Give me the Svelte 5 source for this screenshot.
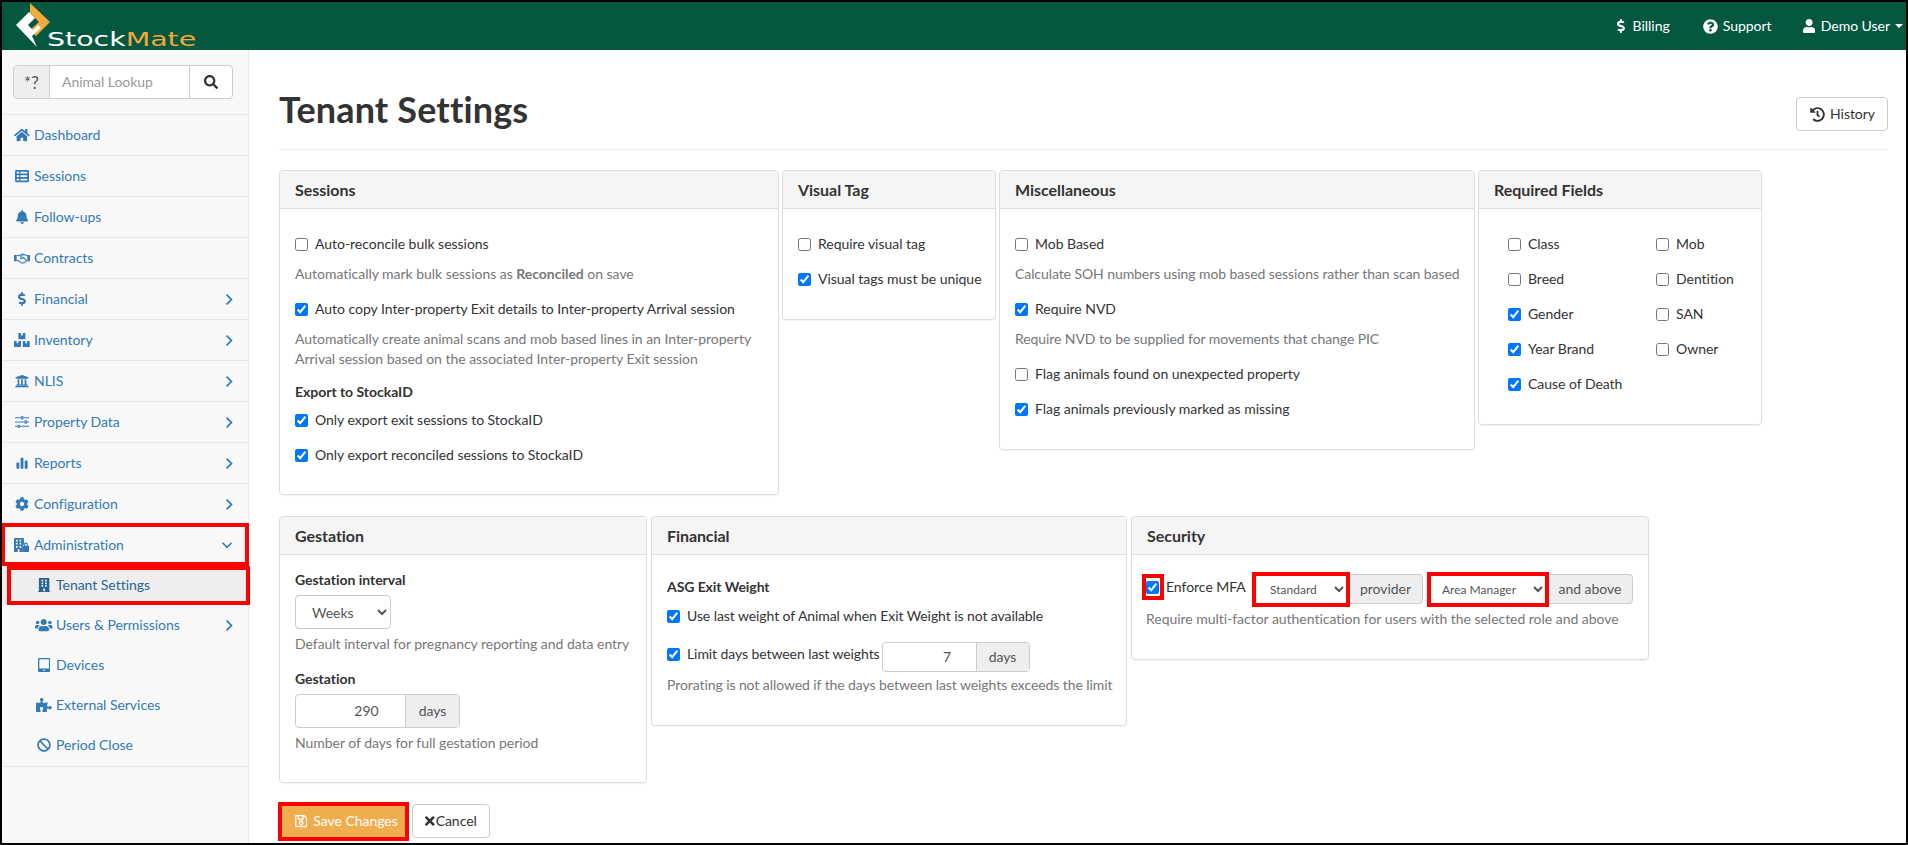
<script>
  const I = {
    home: ['0 0 576 512', 'M280.37 148.26L96 300.11V464a16 16 0 0 0 16 16l112.06-.29a16 16 0 0 0 15.92-16V368a16 16 0 0 1 16-16h64a16 16 0 0 1 16 16v95.64a16 16 0 0 0 16 16.05L464 480a16 16 0 0 0 16-16V300L295.67 148.26a12.19 12.19 0 0 0-15.3 0zM571.6 251.47L488 182.56V44.05a12 12 0 0 0-12-12h-56a12 12 0 0 0-12 12v72.61L318.47 43a48 48 0 0 0-61 0L4.34 251.47a12 12 0 0 0-1.6 16.9l25.5 31A12 12 0 0 0 45.15 301l235.22-193.74a12.19 12.19 0 0 1 15.3 0L530.9 301a12 12 0 0 0 16.9-1.6l25.5-31a12 12 0 0 0-1.7-16.93z'],
    table: ['0 0 512 512', 'M464 32H48C21.49 32 0 53.49 0 80v352c0 26.51 21.49 48 48 48h416c26.51 0 48-21.49 48-48V80c0-26.51-21.49-48-48-48zM152 416H64V352h88zm0-128H64V224h88zm0-128H64V96h88zm296 256H200V352h248zm0-128H200V224h248zm0-128H200V96h248z'],
    bell: ['0 0 448 512', 'M224 512c35.32 0 63.97-28.65 63.97-64H160.03c0 35.35 28.65 64 63.97 64zm215.39-149.71c-19.32-20.76-55.47-51.99-55.47-154.29 0-77.7-54.48-139.9-127.94-155.16V32c0-17.67-14.32-32-31.98-32s-31.98 14.33-31.98 32v20.84C118.56 68.1 64.08 130.3 64.08 208c0 102.3-36.15 133.53-55.47 154.29-6 6.45-8.66 14.16-8.61 21.71.11 16.4 12.98 32 32.1 32h383.8c19.12 0 32-15.6 32.1-32 .05-7.55-2.61-15.27-8.61-21.71z'],
    dollar: ['0 0 288 512', 'M209.2 233.4l-108-31.6C88.7 198.2 80 186.5 80 173.5c0-16.3 13.2-29.5 29.5-29.5h66.3c12.2 0 24.2 3.7 34.2 10.5 6.1 4.1 14.3 3.1 19.5-2l34.8-34c7.1-6.9 6.1-18.4-1.8-24.5C238 74.8 207.4 64.1 176 64V16c0-8.8-7.2-16-16-16h-32c-8.8 0-16 7.2-16 16v48h-2.5C45.8 64-5.4 118.7.5 183.6c4.2 46.1 39.4 83.6 83.8 96.6l102.5 30c12.5 3.7 21.2 15.3 21.2 28.3 0 16.3-13.2 29.5-29.5 29.5h-66.3C100 368 88 364.3 78 357.5c-6.1-4.1-14.3-3.1-19.5 2l-34.8 34c-7.1 6.9-6.1 18.4 1.8 24.5 24.5 19.2 55.1 29.9 86.5 30v48c0 8.8 7.2 16 16 16h32c8.8 0 16-7.2 16-16v-48.2c46.6-.9 90.3-28.6 105.7-72.7 21.5-61.6-14.6-124.8-72.5-141.7z'],
    boxes: ['0 0 576 512', 'M560 288h-80v96l-32-21.3-32 21.3v-96h-80c-8.8 0-16 7.2-16 16v192c0 8.8 7.2 16 16 16h224c8.8 0 16-7.2 16-16V304c0-8.8-7.2-16-16-16zm-384-64h224c8.8 0 16-7.2 16-16V16c0-8.8-7.2-16-16-16h-80v96l-32-21.3L256 96V0h-80c-8.8 0-16 7.2-16 16v192c0 8.8 7.2 16 16 16zm64 64h-80v96l-32-21.3L96 384v-96H16c-8.8 0-16 7.2-16 16v192c0 8.8 7.2 16 16 16h224c8.8 0 16-7.2 16-16V304c0-8.8-7.2-16-16-16z'],
    bank: ['0 0 512 512', 'M496 128v16a8 8 0 0 1-8 8h-24v12c0 6.627-5.373 12-12 12H60c-6.627 0-12-5.373-12-12v-12H24a8 8 0 0 1-8-8v-16a8 8 0 0 1 4.941-7.392l232-88a7.996 7.996 0 0 1 6.118 0l232 88A8 8 0 0 1 496 128zm-24 304H40c-13.255 0-24 10.745-24 24v16a8 8 0 0 0 8 8h464a8 8 0 0 0 8-8v-16c0-13.255-10.745-24-24-24zM96 192v192H60c-6.627 0-12 5.373-12 12v20h416v-20c0-6.627-5.373-12-12-12h-36V192h-64v192h-64V192h-64v192h-64V192H96z'],
    sliders: ['0 0 512 512', 'M0 84h224V56a16 16 0 0 1 16-16h48a16 16 0 0 1 16 16v28h208v32H304v28a16 16 0 0 1-16 16h-48a16 16 0 0 1-16-16v-28H0zm256-12v56h16V72zM0 240h352v-28a16 16 0 0 1 16-16h48a16 16 0 0 1 16 16v28h80v32h-80v28a16 16 0 0 1-16 16h-48a16 16 0 0 1-16-16v-28H0zm384-12v56h16v-56zM0 396h96v-28a16 16 0 0 1 16-16h48a16 16 0 0 1 16 16v28h336v32H176v28a16 16 0 0 1-16 16h-48a16 16 0 0 1-16-16v-28H0zm128-12v56h16v-56z'],
    bars: ['0 0 448 512', 'M32 240h72a16 16 0 0 1 16 16v192a16 16 0 0 1-16 16H32a16 16 0 0 1-16-16V256a16 16 0 0 1 16-16zM184 64h72a16 16 0 0 1 16 16v368a16 16 0 0 1-16 16h-72a16 16 0 0 1-16-16V80a16 16 0 0 1 16-16zM336 160h72a16 16 0 0 1 16 16v272a16 16 0 0 1-16 16h-72a16 16 0 0 1-16-16V176a16 16 0 0 1 16-16z'],
    cog: ['0 0 512 512', 'M487.4 315.7l-42.6-24.6c4.3-23.2 4.3-47 0-70.2l42.6-24.6c4.9-2.8 7.1-8.6 5.5-14-11.1-35.6-30-67.8-54.7-94.6-3.8-4.1-10-5.1-14.8-2.3L380.8 110c-17.9-15.4-38.5-27.3-60.8-35.1V25.8c0-5.6-3.9-10.5-9.4-11.7-36.7-8.2-74.3-7.8-109.2 0-5.5 1.2-9.4 6.1-9.4 11.7V75c-22.2 7.9-42.8 19.8-60.8 35.1L88.7 85.5c-4.9-2.8-11-1.9-14.8 2.3-24.7 26.7-43.6 58.9-54.7 94.6-1.7 5.4.6 11.2 5.5 14L67.3 221c-4.3 23.2-4.3 47 0 70.2l-42.6 24.6c-4.9 2.8-7.1 8.6-5.5 14 11.1 35.6 30 67.8 54.7 94.6 3.8 4.1 10 5.1 14.8 2.3l42.6-24.6c17.9 15.4 38.5 27.3 60.8 35.1v49.2c0 5.6 3.9 10.5 9.4 11.7 36.7 8.2 74.3 7.8 109.2 0 5.5-1.2 9.4-6.1 9.4-11.7v-49.2c22.2-7.9 42.8-19.8 60.8-35.1l42.6 24.6c4.9 2.8 11 1.9 14.8-2.3 24.7-26.7 43.6-58.9 54.7-94.6 1.5-5.5-.7-11.3-5.6-14.1zM256 336c-44.1 0-80-35.9-80-80s35.9-80 80-80 80 35.9 80 80-35.9 80-80 80z'],
    building: ['0 0 448 512', 'M436 480h-20V24c0-13.255-10.745-24-24-24H56C42.745 0 32 10.745 32 24v456H12c-6.627 0-12 5.373-12 12v20h448v-20c0-6.627-5.373-12-12-12zM128 76c0-6.627 5.373-12 12-12h40c6.627 0 12 5.373 12 12v40c0 6.627-5.373 12-12 12h-40c-6.627 0-12-5.373-12-12V76zm0 96c0-6.627 5.373-12 12-12h40c6.627 0 12 5.373 12 12v40c0 6.627-5.373 12-12 12h-40c-6.627 0-12-5.373-12-12v-40zm52 148h-40c-6.627 0-12-5.373-12-12v-40c0-6.627 5.373-12 12-12h40c6.627 0 12 5.373 12 12v40c0 6.627-5.373 12-12 12zm76 160h-64v-84c0-6.627 5.373-12 12-12h40c6.627 0 12 5.373 12 12v84zm64-172c0 6.627-5.373 12-12 12h-40c-6.627 0-12-5.373-12-12v-40c0-6.627 5.373-12 12-12h40c6.627 0 12 5.373 12 12v40zm0-96c0 6.627-5.373 12-12 12h-40c-6.627 0-12-5.373-12-12v-40c0-6.627 5.373-12 12-12h40c6.627 0 12 5.373 12 12v40zm0-96c0 6.627-5.373 12-12 12h-40c-6.627 0-12-5.373-12-12V76c0-6.627 5.373-12 12-12h40c6.627 0 12 5.373 12 12v40z'],
    lockbuilding: ['0 0 552 512', 'M24 0H340a24 24 0 0 1 24 24V232c-30 10-44 40-44 72v208H200V412h-64v100H0V24A24 24 0 0 1 24 0zM72 64v64h64V64zM200 64v64h64V64zM72 176v64h64V176zM200 176v64h64V176zM72 288v64h64V288zM200 288v64h64V288zM360 280v-40a72 72 0 0 1 144 0v40h16a32 32 0 0 1 32 32v168a32 32 0 0 1-32 32H344a32 32 0 0 1-32-32V312a32 32 0 0 1 32-32zM400 280h64v-40a32 32 0 0 0-64 0z'],
    users: ['0 0 640 512', 'M96 224c35.3 0 64-28.7 64-64s-28.7-64-64-64-64 28.7-64 64 28.7 64 64 64zm448 0c35.3 0 64-28.7 64-64s-28.7-64-64-64-64 28.7-64 64 28.7 64 64 64zm32 32h-64c-17.6 0-33.5 7.1-45.1 18.6 40.3 22.1 68.9 62 75.1 109.4h66c17.7 0 32-14.3 32-32v-32c0-35.3-28.7-64-64-64zm-256 0c61.9 0 112-50.1 112-112S381.9 32 320 32 208 82.1 208 144s50.1 112 112 112zm76.8 32h-8.3c-20.8 10-43.9 16-68.5 16s-47.6-6-68.5-16h-8.3C179.6 288 128 339.6 128 403.2V432c0 26.5 21.5 48 48 48h288c26.5 0 48-21.5 48-48v-28.8c0-63.6-51.6-115.2-115.2-115.2zm-223.7-13.4C161.5 263.1 145.6 256 128 256H64c-35.3 0-64 28.7-64 64v32c0 17.7 14.3 32 32 32h65.9c6.3-47.4 34.9-87.3 75.2-109.4z'],
    tablet: ['0 0 448 512', 'M400 0H48C21.5 0 0 21.5 0 48v416c0 26.5 21.5 48 48 48h352c26.5 0 48-21.5 48-48V48c0-26.5-21.5-48-48-48zM224 480c-17.7 0-32-14.3-32-32s14.3-32 32-32 32 14.3 32 32-14.3 32-32 32zm176-108c0 6.6-5.4 12-12 12H60c-6.6 0-12-5.4-12-12V60c0-6.6 5.4-12 12-12h328c6.6 0 12 5.4 12 12v312z'],
    puzzle: ['0 0 576 512', 'M519.442 288.651c-41.519 0-59.5 31.593-82.058 31.593C377.409 320.244 432 144 432 144s-196.288 80-196.288-3.297c0-35.827 36.288-46.25 36.288-85.985C272 19.216 243.885 0 210.539 0c-34.654 0-66.366 18.891-66.366 56.346 0 41.364 31.711 59.277 31.711 81.75C175.885 207.719 0 166.758 0 166.758v333.237s178.635 41.047 178.635-28.662c0-22.473-40-40.107-40-81.471 0-37.456 29.25-56.346 63.577-56.346 33.673 0 61.788 19.216 61.788 54.717 0 39.735-36.288 50.158-36.288 85.985 0 60.803 129.675 25.73 181.23 25.73 0 0-34.725-120.101 25.827-120.101 35.962 0 46.423 36.152 86.308 36.152C556.712 416 576 387.99 576 354.443c0-34.199-18.962-65.792-56.558-65.792z'],
    ban: ['0 0 512 512', 'M256 8C119.034 8 8 119.033 8 256s111.034 248 248 248 248-111.034 248-248S392.967 8 256 8zm130.108 117.892c65.448 65.448 70 165.481 20.677 235.637L150.47 105.216c70.204-49.356 170.226-44.735 235.638 20.676zM125.892 386.108c-65.448-65.448-70-165.481-20.677-235.637L361.53 406.784c-70.203 49.356-170.226 44.736-235.638-20.676z'],
    search: ['0 0 512 512', 'M505 442.7L405.3 343c-4.5-4.5-10.6-7-17-7H372c27.6-35.3 44-79.7 44-128C416 93.1 322.9 0 208 0S0 93.1 0 208s93.1 208 208 208c48.3 0 92.7-16.4 128-44v16.3c0 6.4 2.5 12.5 7 17l99.7 99.7c9.4 9.4 24.6 9.4 33.9 0l28.3-28.3c9.4-9.4 9.4-24.6.1-34zM208 336c-70.7 0-128-57.2-128-128 0-70.7 57.2-128 128-128 70.7 0 128 57.2 128 128 0 70.7-57.2 128-128 128z'],
    user: ['0 0 448 512', 'M224 256c70.7 0 128-57.3 128-128S294.7 0 224 0 96 57.3 96 128s57.3 128 128 128zm89.6 32h-16.7c-22.2 10.2-46.9 16-72.9 16s-50.6-5.8-72.9-16h-16.7C60.2 288 0 348.2 0 422.4V464c0 26.5 21.5 48 48 48h352c26.5 0 48-21.5 48-48v-41.6c0-74.2-60.2-134.4-134.4-134.4z'],
    question: ['0 0 512 512', 'M504 256c0 136.997-111.043 248-248 248S8 392.997 8 256C8 119.083 119.043 8 256 8s248 111.083 248 248zM262.655 90c-54.497 0-89.255 22.957-116.549 63.758-3.536 5.286-2.353 12.415 2.715 16.258l34.699 26.31c5.205 3.947 12.621 3.008 16.665-2.122 17.864-22.658 30.113-35.797 57.303-35.797 20.429 0 45.698 13.148 45.698 32.958 0 14.976-12.363 22.667-32.534 33.976C247.128 238.528 216 254.941 216 296v4c0 6.627 5.373 12 12 12h56c6.627 0 12-5.373 12-12v-1.333c0-28.462 83.186-29.647 83.186-106.667 0-58.002-60.165-102-116.531-102zM256 338c-25.365 0-46 20.635-46 46 0 25.364 20.635 46 46 46s46-20.636 46-46c0-25.365-20.635-46-46-46z'],
    save: ['0 0 448 512', 'M433.941 129.941l-83.882-83.882A48 48 0 0 0 316.118 32H48C21.49 32 0 53.49 0 80v352c0 26.51 21.49 48 48 48h352c26.51 0 48-21.49 48-48V163.882a48 48 0 0 0-14.059-33.941zM272 80v80H144V80h128zm122 352H54a6 6 0 0 1-6-6V86a6 6 0 0 1 6-6h42v104c0 13.255 10.745 24 24 24h176c13.255 0 24-10.745 24-24V83.882l78.243 78.243a6 6 0 0 1 1.757 4.243V426a6 6 0 0 1-6 6zM224 232c-48.523 0-88 39.477-88 88s39.477 88 88 88 88-39.477 88-88-39.477-88-88-88zm0 128c-22.056 0-40-17.944-40-40s17.944-40 40-40 40 17.944 40 40-17.944 40-40 40z'],
    times: ['0 0 352 512', 'M242.72 256l100.07-100.07c12.28-12.28 12.28-32.19 0-44.48l-22.24-22.24c-12.28-12.28-32.19-12.28-44.48 0L176 189.28 75.93 89.21c-12.28-12.28-32.19-12.28-44.48 0L9.21 111.45c-12.28 12.28-12.28 32.19 0 44.48L109.28 256 9.21 356.07c-12.28 12.28-12.28 32.19 0 44.48l22.24 22.24c12.28 12.28 32.2 12.28 44.48 0L176 322.72l100.07 100.07c12.28 12.28 32.2 12.28 44.48 0l22.24-22.24c12.28-12.28 12.28-32.19 0-44.48L242.72 256z'],
    history: ['0 0 512 512', 'M504 255.531c.253 136.64-111.18 248.372-247.82 248.468-59.015.042-113.223-20.53-155.822-54.911-11.077-8.94-11.905-25.541-1.839-35.607l11.267-11.267c8.609-8.609 22.353-9.551 31.891-1.984C173.062 425.135 212.781 440 256 440c101.705 0 184-82.311 184-184 0-101.705-82.311-184-184-184-48.814 0-93.149 18.969-126.068 49.932l50.754 50.754c10.08 10.08 2.941 27.314-11.313 27.314H24c-8.837 0-16-7.163-16-16V38.627c0-14.254 17.234-21.393 27.314-11.314l49.372 49.372C129.209 34.136 189.552 8 256 8c136.81 0 247.747 110.78 248 247.531zm-180.912 78.784l9.823-12.63c8.138-10.463 6.253-25.542-4.21-33.679L288 256.349V152c0-13.255-10.745-24-24-24h-16c-13.255 0-24 10.745-24 24v135.651l65.409 50.874c10.463 8.137 25.541 6.253 33.679-4.21z']
  };

  const topNav = [
    { icon: 'home', label: 'Dashboard' }, { icon: 'table', label: 'Sessions' },
    { icon: 'bell', label: 'Follow-ups' }, { icon: 'handshake', label: 'Contracts' },
    { icon: 'dollar', label: 'Financial', more: true }, { icon: 'boxes', label: 'Inventory', more: true },
    { icon: 'bank', label: 'NLIS', more: true }, { icon: 'sliders', label: 'Property Data', more: true },
    { icon: 'bars', label: 'Reports', more: true }, { icon: 'cog', label: 'Configuration', more: true }
  ];
  const subNav = [
    { icon: 'users', label: 'Users & Permissions', more: true }, { icon: 'tablet', label: 'Devices' },
    { icon: 'puzzle', label: 'External Services' }, { icon: 'ban', label: 'Period Close' }
  ];
  const req1 = [['Class', false], ['Breed', false], ['Gender', true], ['Year Brand', true], ['Cause of Death', true]];
  const req2 = [['Mob', false], ['Dentition', false], ['SAN', false], ['Owner', false]];
</script>

{#snippet icon(name, cls = '')}
  {#if name === 'handshake'}
    <svg class="shake" viewBox="0 0 18 13" aria-hidden="true">
      <path class="solid" d="M0 2.5h3v7H0zM15 2.5h3v7h-3z" />
      <path class="line" d="M3 3.5l3.5-.5 2-1.2h2L15 3.5M3 8.5l1.5.2 4 3 1 .2 1-.8 1 .2 1-1 .8-.2.7-1.3 1-.4M10.2 2.5L7.5 5c-.7 1 .6 1.8 1.6 1.2l1.6-1 3 3.4" />
    </svg>
  {:else}
    <svg class="ic {cls}" viewBox={I[name][0]} aria-hidden="true"><path d={I[name][1]} /></svg>
  {/if}
{/snippet}

{#snippet chev()}
  <svg class="chev" viewBox="0 0 10 16" aria-hidden="true"><path d="M2 2l6 6-6 6" /></svg>
{/snippet}

{#snippet check(label, on)}
  <label class="check"><input type="checkbox" checked={on} /><span>{label}</span></label>
{/snippet}

<div class="frame">
  <header class="top">
    <div class="brand">
      <svg class="mark" viewBox="0 0 40 46" aria-hidden="true">
        <polygon fill="#f3a93b" points="15,0 35,19 21,33 15,27 24,19 15,10" />
        <polygon fill="#fff" points="1,22 14,9 20,15 13,22 18,27 23,22 26,25 17,33 22,44 22,44 1,22" />
      </svg>
      <span class="word"><span>Stock</span><span class="mate">Mate</span></span>
    </div>
    <nav class="topnav">
      <span class="tn">{@render icon('dollar', 'w-d')}Billing</span>
      <span class="tn">{@render icon('question', 'w-q')}Support</span>
      <span class="tn">{@render icon('user', 'w-u')}Demo User<i class="caret"></i></span>
    </nav>
  </header>

  <div class="body">
    <aside class="side">
      <div class="search">
        <div class="lookup">
          <span class="star">*?</span>
          <span class="ph">Animal Lookup</span>
          <span class="go">{@render icon('search')}</span>
        </div>
      </div>
      {#each topNav as n}
        <div class="item"><span class="slot">{@render icon(n.icon)}</span><span class="lbl">{n.label}</span>{#if n.more}{@render chev()}{/if}</div>
      {/each}
      <div class="item admin">
        <span class="slot">{@render icon('lockbuilding')}</span><span class="lbl">Administration</span>
        <svg class="chev down" viewBox="0 0 16 10" aria-hidden="true"><path d="M2 2l6 6 6-6" /></svg>
        <i class="hl hl-admin"></i>
      </div>
      <div class="sub active">
        <span class="slot">{@render icon('building')}</span><span class="lbl">Tenant Settings</span>
        <i class="hl hl-tenant"></i>
      </div>
      {#each subNav as n}
        <div class="sub"><span class="slot">{@render icon(n.icon)}</span><span class="lbl">{n.label}</span>{#if n.more}{@render chev()}{/if}</div>
      {/each}
      <div class="endline"></div>
    </aside>

    <main class="main">
      <div class="title">
        <h1>Tenant Settings</h1>
        <button class="btn hist">{@render icon('history')}History</button>
      </div>

      <div class="row first">
        <section class="card c-sessions">
          <h2>Sessions</h2>
          <div class="cb">
            {@render check('Auto-reconcile bulk sessions', false)}
            <p class="help">Automatically mark bulk sessions as <b>Reconciled</b> on save</p>
            {@render check('Auto copy Inter-property Exit details to Inter-property Arrival session', true)}
            <p class="help">Automatically create animal scans and mob based lines in an Inter-property<br />Arrival session based on the associated Inter-property Exit session</p>
            <h3 class="export">Export to StockaID</h3>
            {@render check('Only export exit sessions to StockaID', true)}
            {@render check('Only export reconciled sessions to StockaID', true)}
          </div>
        </section>
        <section class="card c-visual">
          <h2>Visual Tag</h2>
          <div class="cb">
            {@render check('Require visual tag', false)}
            {@render check('Visual tags must be unique', true)}
          </div>
        </section>
        <section class="card c-misc">
          <h2>Miscellaneous</h2>
          <div class="cb">
            {@render check('Mob Based', false)}
            <p class="help">Calculate SOH numbers using mob based sessions rather than scan based</p>
            {@render check('Require NVD', true)}
            <p class="help">Require NVD to be supplied for movements that change PIC</p>
            {@render check('Flag animals found on unexpected property', false)}
            {@render check('Flag animals previously marked as missing', true)}
          </div>
        </section>
        <section class="card c-req">
          <h2>Required Fields</h2>
          <div class="cb req">
            <div class="col col-a">{#each req1 as r}{@render check(r[0], r[1])}{/each}</div>
            <div class="col">{#each req2 as r}{@render check(r[0], r[1])}{/each}</div>
          </div>
        </section>
      </div>

      <div class="row second">
        <section class="card c-gest">
          <h2>Gestation</h2>
          <div class="cb tight">
            <h3>Gestation interval</h3>
            <select class="sel weeks"><option>Weeks</option></select>
            <p class="help h5">Default interval for pregnancy reporting and data entry</p>
            <h3>Gestation</h3>
            <div class="ig big"><span class="val v-gest">290</span><span class="addon">days</span></div>
            <p class="help h5">Number of days for full gestation period</p>
          </div>
        </section>
        <section class="card c-fin">
          <h2>Financial</h2>
          <div class="cb">
            <h3 class="asg">ASG Exit Weight</h3>
            {@render check('Use last weight of Animal when Exit Weight is not available', true)}
            <div class="limit">
              {@render check('Limit days between last weights', true)}
              <div class="ig small"><span class="val v-lim">7</span><span class="addon">days</span></div>
            </div>
            <p class="help lim-help">Prorating is not allowed if the days between last weights exceeds the limit</p>
          </div>
        </section>
        <section class="card c-sec">
          <h2>Security</h2>
          <div class="cb tight sec">
            <div class="mfa">
              <label class="enforce">
                <span class="boxwrap"><input type="checkbox" checked /><i class="hl hl-check"></i></span>
                <span>Enforce MFA</span>
              </label>
              <span class="selwrap s-std"><select class="mini"><option>Standard</option></select><i class="hl hl-sel"></i></span>
              <span class="addon small-add a-prov">provider</span>
              <span class="selwrap s-area"><select class="mini"><option>Area Manager</option></select><i class="hl hl-sel"></i></span>
              <span class="addon small-add a-above">and above</span>
            </div>
            <p class="help h5">Require multi-factor authentication for users with the selected role and above</p>
          </div>
        </section>
      </div>

      <div class="actions">
        <button class="btn save">{@render icon('save')}Save Changes<i class="hl hl-save"></i></button>
        <button class="btn cancel">{@render icon('times')}Cancel</button>
      </div>
    </main>
  </div>
</div>

<style>
  :global(body) { margin: 0; background: #fff; }
  .frame {
    box-sizing: border-box; width: 1908px; height: 845px; border: 2px solid #000; overflow: hidden;
    display: flex; flex-direction: column;
    font-family: Lato, "Liberation Sans", sans-serif; font-size: 14px; line-height: 20px; color: #333; letter-spacing: -0.03px;
  }
  .ic { display: block; flex: none; height: 14px; width: auto; fill: currentColor; fill-rule: evenodd; }
  .shake { display: block; width: 18px; height: 13px; }
  .shake .solid { fill: currentColor; }
  .shake .line { fill: none; stroke: currentColor; stroke-width: 1.2; }

  .top { height: 48px; flex: none; background: #04583f; display: flex; align-items: center; justify-content: space-between; color: #fff; }
  .brand { position: relative; display: flex; height: 48px; width: 220px; }
  .mark { width: 40px; height: 46px; margin: 1px 0 0 13px; flex: none; }
  .word {
    font-family: "DejaVu Sans", sans-serif; font-size: 19px; line-height: 20px; white-space: nowrap;
    transform: scaleX(1.5); transform-origin: left; margin: 27px 0 0 -8px; height: 20px; color: #fff;
  }
  .mate { color: #f3a93b; }
  .topnav { display: flex; align-items: center; margin-right: 3px; }
  .tn { display: flex; align-items: center; margin-left: 31px; }
  .tn:nth-child(2) { margin-left: 33px; }
  .tn .w-d { height: 14px; margin-right: 8px; }
  .tn .w-q { height: 15px; margin-right: 5px; }
  .tn .w-u { height: 14px; margin-right: 6px; }
  .caret { width: 0; height: 0; margin-left: 5px; border: 4px solid transparent; border-top-color: #fff; border-bottom: 0; }

  .body { flex: 1; display: flex; min-height: 0; }
  .side { width: 247px; flex: none; box-sizing: border-box; background: #f8f8f8; border-right: 1px solid #e7e7e7; }
  .search { padding: 15px 14px 15px 11px; border-bottom: 1px solid #e7e7e7; }
  .lookup { display: flex; height: 34px; box-sizing: border-box; width: 220px; border: 1px solid #ccc; border-radius: 4px; background: #fff; align-items: stretch; }
  .star { width: 36px; flex: none; border-right: 1px solid #ccc; background: #eee; color: #555; display: flex; align-items: center; justify-content: center; border-radius: 3px 0 0 3px; font-size: 17px; padding-top: 2px; box-sizing: border-box; }
  .ph { flex: 1; color: #999; display: flex; align-items: center; padding-left: 12px; }
  .go { width: 42px; flex: none; border-left: 1px solid #ccc; display: flex; align-items: center; justify-content: center; color: #333; }
  .item, .sub { position: relative; display: flex; align-items: center; color: #337ab7; box-sizing: border-box; }
  .item { height: 41px; border-bottom: 1px solid #e7e7e7; padding-left: 12px; }
  .slot { width: 16px; height: 16px; margin-right: 4px; display: flex; align-items: center; justify-content: center; flex: none; }
  .lbl { flex: 1; }
  .chev { width: 8px; height: 13px; margin-right: 15px; fill: none; stroke: #337ab7; stroke-width: 2.2; }
  .item .down { width: 12px; height: 8px; margin-right: 15px; }
  .sub { height: 40px; padding-left: 33px; }
  .sub .slot { margin-right: 3px; width: 18px; }
  .sub.active { background: #eee; color: #2a6496; }
  .endline { border-bottom: 1px solid #e7e7e7; margin-top: 1px; }
  .item.admin { height: 40px; border-bottom: 0; }

  .hl { position: absolute; border: 4px solid #f00; box-sizing: border-box; pointer-events: none; z-index: 2; }
  .hl-admin { left: -1px; right: -1px; top: -2px; bottom: -1px; }
  .hl-tenant { left: 5px; right: -2px; top: 1px; bottom: 0; }
  .hl-check { left: -4px; right: 2px; top: -7px; bottom: -6px; }
  .hl-sel { left: -2px; right: -2px; top: -2px; bottom: -3px; }
  .hl-save { left: -2px; right: -2px; top: -3px; bottom: -4px; }

  .main { flex: 1; min-width: 0; padding: 0 18px 0 30px; box-sizing: border-box; }
  .title { display: flex; justify-content: space-between; align-items: flex-start; height: 99px; border-bottom: 1px solid #eee; margin-bottom: 20px; }
  h1 { margin: 37px 0 0; font-size: 36px; line-height: 44px; font-weight: 700; color: #333; letter-spacing: 0.15px; }
  .btn { font: inherit; letter-spacing: inherit; display: inline-flex; align-items: center; background: #fff; border: 1px solid #ccc; border-radius: 4px; color: #333; height: 34px; padding: 0 12px; box-sizing: border-box; position: relative; white-space: nowrap; }
  .hist { margin-top: 47px; width: 92px; padding-left: 13px; }
  .hist .ic { margin-right: 5px; height: 15px; }

  .row { display: flex; align-items: flex-start; }
  .first { gap: 3px; height: 325px; margin-bottom: 21px; }
  .second { gap: 4px; height: 267px; margin-bottom: 21px; }
  .card { box-sizing: border-box; border: 1px solid #ddd; border-radius: 4px; flex: none; box-shadow: 0 1px 1px rgba(0,0,0,.05); }
  .card h2 { margin: 0; height: 38px; box-sizing: border-box; padding: 0 15px; display: flex; align-items: center; background: #f5f5f5; border-bottom: 1px solid #ddd; font-size: 16px; font-weight: 700; color: #333; border-radius: 3px 3px 0 0; }
  .cb { padding: 25px 15px 15px; display: flex; flex-direction: column; }
  .cb.tight { padding-top: 15px; }
  .c-sessions { width: 500px; height: 325px; }
  .c-visual { width: 214px; }
  .c-misc { width: 476px; }
  .c-req { width: 284px; }
  .c-gest { width: 368px; height: 267px; }
  .c-fin { width: 476px; letter-spacing: -0.08px; }
  .c-sec { width: 518px; }

  .check { display: flex; align-items: center; margin-bottom: 15px; height: 20px; white-space: nowrap; }
  .check input, .enforce input { width: 13px; height: 13px; margin: 0 7px 0 0; flex: none; }
  .help { margin: -5px 0 15px; color: #777; white-space: nowrap; }
  .c-misc .help { letter-spacing: -0.08px; }
  .help.h5 { margin: 5px 0 15px; }
  h3 { margin: 0; font-size: 14px; line-height: 20px; font-weight: 700; }
  h3.export { margin-bottom: 8px; margin-top: -2px; }
  .req { flex-direction: row; padding-left: 29px; }
  .col { display: flex; flex-direction: column; }
  .col-a { width: 148px; }

  .sel { font: inherit; color: #555; background: #fff; border: 1px solid #ccc; border-radius: 4px; }
  .weeks { width: 96px; height: 34px; margin-top: 5px; padding-left: 12px; }
  .ig { display: flex; box-sizing: border-box; border: 1px solid #ccc; border-radius: 4px; overflow: hidden; }
  .big { width: 165px; height: 34px; margin-top: 5px; }
  .small { width: 148px; height: 30px; margin: 0 0 0 2px; }
  .val { display: flex; align-items: center; justify-content: center; flex: 1; color: #555; }
  .v-gest { padding-left: 32px; }
  .v-lim { padding-left: 36px; }
  .addon { background: #eee; color: #555; display: flex; align-items: center; justify-content: center; border-left: 1px solid #ccc; }
  .big .addon { width: 53px; flex: none; }
  .small .addon { width: 52px; flex: none; }
  h3.asg { margin: -3px 0 9px; }
  .limit { display: flex; align-items: flex-start; height: 30px; margin-top: 1px; }
  .limit .check { margin: 2px 0 0; }
  .help.lim-help { margin: 3px 0 15px; }

  .cb.sec { padding-top: 19px; padding-left: 9px; }
  .mfa { display: flex; align-items: center; height: 30px; }
  .enforce { display: flex; align-items: center; white-space: nowrap; margin-left: 5px; width: 94px; height: 30px; margin-top: -4px; }
  .boxwrap { position: relative; display: flex; }
  .selwrap { position: relative; display: flex; flex: none; height: 30px; }
  .s-std { width: 94px; margin-left: 14px; }
  .s-area { width: 118px; margin-left: 6px; }
  .mini { font: inherit; font-size: 12px; width: 100%; height: 30px; padding-left: 11px; color: #555; background: #fff; border: 1px solid #ccc; border-radius: 4px 0 0 4px; }
  .s-area .mini { padding-left: 8px; }
  .small-add { height: 30px; box-sizing: border-box; border: 1px solid #ccc; border-radius: 0 4px 4px 0; flex: none; }
  .a-prov { width: 75px; }
  .a-above { width: 86px; }
  .c-sec .help { padding-left: 5px; }

  .actions { display: flex; gap: 4px; align-items: center; }
  .save { background: #f0ad4e; border-color: #eea236; color: #fff; width: 129px; height: 34px; padding: 0 0 0 15px; }
  .save .ic { height: 14px; margin-right: 6px; }
  .cancel { width: 78px; }
  .cancel .ic { height: 14px; margin-right: 1px; }
</style>
